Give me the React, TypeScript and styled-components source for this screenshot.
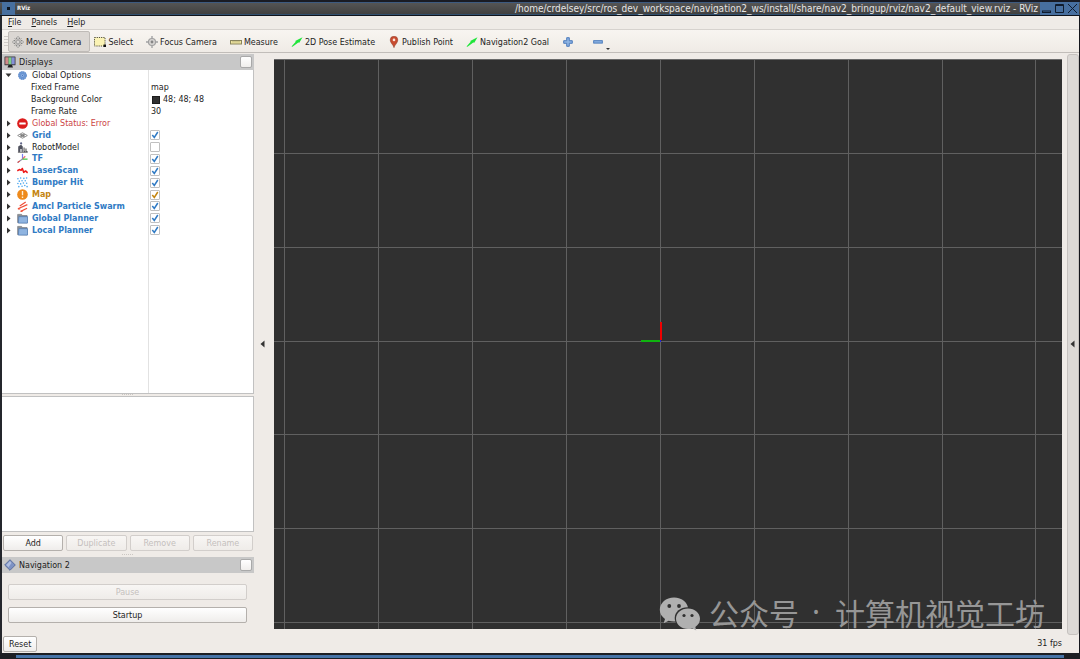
import React from "react";
import styled, { createGlobalStyle, css } from "styled-components";

const SANS = '"DejaVu Sans", Verdana, sans-serif';

const GlobalStyle = createGlobalStyle`
  *, *::before, *::after { box-sizing: border-box; }
  body { margin: 0; background: #efebe7; }
  button, input { font: inherit; color: inherit; margin: 0; }
  svg { display: block; }
`;

const Window = styled.div`
  display: flex;
  flex-direction: column;
  min-height: 100vh;
  font: 8px/12px ${SANS};
  color: #1c1c1c;
  background: #efebe7;
`;

/* ---------- window frame ---------- */

const TitleBar = styled.header`
  display: flex;
  align-items: stretch;
  height: 16px;
  padding: 0 1px 0 2px;
  border-top: 2px solid #191b24;
  border-bottom: 1px solid #10141c;
  background: linear-gradient(#565656, #3f3f3f);
  box-shadow: inset 0 1px #3d5a80, inset 0 -1px #31506f;
`;

const FrameButton = styled.button`
  display: grid;
  place-items: center;
  width: 13px;
  padding: 0;
  border: 0;
  color: #101c2e;
  background: #476f9f;
`;

const AppMark = styled.span`
  padding-left: 2px;
  font: bold 6px/12px "DejaVu Sans Condensed", ${SANS};
  color: #f4f4f4;
`;

const WindowTitle = styled.h1`
  flex: 1;
  margin: 0;
  padding-right: 2px;
  overflow: hidden;
  font: 10px/13px "DejaVu Sans Condensed", ${SANS};
  text-align: right;
  white-space: nowrap;
  color: #e6e6e6;
`;

const Body = styled.div`
  flex: 1;
  display: flex;
  flex-direction: column;
  border-left: 2px solid #24262c;
  border-right: 1px solid #14161c;
`;

const BottomFrame = styled.footer`
  height: 6px;
  border: solid #1c1e23;
  border-width: 2px 16px 1px 16px;
  background: #4673a6;
`;

/* ---------- menu and tool bar ---------- */

const MenuBar = styled.nav`
  display: flex;
  gap: 10px;
  height: 14px;
  padding: 0 6px;
  border-bottom: 1px solid #d6d2ce;
`;

const MenuButton = styled.button`
  padding: 0;
  border: 0;
  background: none;
  line-height: 14px;
`;

const ToolBar = styled.div`
  display: flex;
  align-items: center;
  height: 23px;
  padding-left: 2px;
  border-bottom: 1px solid #c1bdb9;
  background: linear-gradient(#f8f5f1, #efebe6);
`;

const Grip = styled.span`
  width: 4px;
  height: 12px;
  background: radial-gradient(circle, #d0ccc8 1px, transparent 1px) 0 0 / 2px 3px;
`;

const Tool = styled.button<{ $active?: boolean }>`
  display: flex;
  align-items: center;
  gap: 2px;
  height: 21px;
  padding: 1px 8px 0 3px;
  border: 1px solid transparent;
  border-radius: 2px;
  background: none;
  line-height: 14px;
  white-space: nowrap;
  > span { padding-top: 2px; }
  ${(p) =>
    p.$active &&
    css`
      border-color: #bfbbb7;
      background: #dbd7d3;
    `}
`;

const SmallTool = styled(Tool)`
  padding: 1px 13px 0 3px;
`;

/* ---------- docks ---------- */

const Main = styled.main`
  flex: 1;
  display: flex;
  padding-top: 1px;
`;

const Side = styled.aside`
  flex: none;
  display: flex;
  flex-direction: column;
  width: 252px;
`;

const DockHeader = styled.div`
  display: flex;
  align-items: center;
  gap: 3px;
  height: 16px;
  padding: 0 2px;
  background: #c8c8c8;
`;

const DockTitle = styled.h2`
  flex: 1;
  margin: 0;
  padding-top: 2px;
  font: inherit;
`;

const FloatButton = styled.button`
  width: 12px;
  height: 12px;
  padding: 0;
  border: 1px solid #a9a9a9;
  border-radius: 2px;
  background: linear-gradient(#ffffff, #f0eeec);
`;

const TreePane = styled.div`
  flex: 325 1 0;
  border-right: 1px solid #c1c1c1;
  border-bottom: 1px solid #c1c1c1;
  background: linear-gradient(#e2e2e2, #e2e2e2) 146px 0 / 1px 100% no-repeat #ffffff;
`;

const Tree = styled.ul`
  display: flex;
  flex-direction: column;
  height: 166px;
  margin: 0;
  padding: 0;
  list-style: none;
`;

type Tone = "plain" | "error" | "ok" | "warn";
const tones: Record<Tone, string> = {
  plain: "#1c1c1c",
  error: "#cc4444",
  ok: "#2f7ac4",
  warn: "#c4850f",
};

const Row = styled.li<{ $tone: Tone }>`
  flex: 1;
  min-height: 0;
  display: grid;
  grid-template-columns: 15px 15px 118px 1fr;
  align-items: center;
  line-height: 11px;
  color: ${(p) => tones[p.$tone]};
  font-weight: ${(p) => (p.$tone === "ok" || p.$tone === "warn" ? "bold" : "normal")};
  white-space: nowrap;
`;

const ChildRow = styled(Row)`
  grid-template-columns: 29px 120px 1fr;
`;

const Expander = styled.button`
  display: grid;
  place-items: center;
  width: 13px;
  height: 10px;
  padding: 0;
  border: 0;
  background: none;
`;

const Value = styled.span`
  display: flex;
  align-items: center;
  gap: 3px;
`;

const Swatch = styled.span`
  width: 8px;
  height: 8px;
  margin-left: 1px;
  border: 1px solid #1c1c1c;
  background: #303030;
`;

const CheckLabel = styled.label`
  display: grid;
  justify-self: start;
  place-items: center;
  > * { grid-area: 1 / 1; }
  > svg { pointer-events: none; visibility: hidden; }
  > input:checked + svg { visibility: visible; }
`;

const CheckInput = styled.input`
  appearance: none;
  width: 10px;
  height: 10px;
  border: 1px solid #c0c0c0;
  border-radius: 1px;
  background: #ffffff;
`;

const Splitter = styled.div<{ $height: number }>`
  display: grid;
  place-items: center;
  height: ${(p) => p.$height}px;
  &::before {
    content: "";
    width: 12px;
    height: 1px;
    background: repeating-linear-gradient(90deg, #cbc7c3 0 1px, transparent 1px 2px);
  }
`;

const Description = styled.div`
  flex: 135 1 0;
  border: 1px solid #c1c1c1;
  border-left: 0;
  background: #ffffff;
`;

const ButtonRow = styled.div`
  display: grid;
  grid-template-columns: repeat(4, 1fr);
  gap: 3px;
  padding: 3px 1px 0;
`;

const PushButton = styled.button`
  height: 16px;
  padding: 2px 5px 0;
  border: 1px solid #b4b0ac;
  border-radius: 2px;
  background: linear-gradient(#ffffff, #efedeb);
  line-height: 12px;
  &:disabled {
    border-color: #d2cecb;
    color: #c4c0bd;
    background: linear-gradient(#f8f6f4, #efece9);
  }
`;

const NavPanel = styled.div`
  display: grid;
  gap: 7px;
  padding: 11px 7px 12px 6px;
`;

const Collapse = styled.button<{ $solid?: boolean }>`
  flex: none;
  display: grid;
  place-items: center;
  width: ${(p) => (p.$solid ? 12 : 18)}px;
  padding: 0 1px 2px 0;
  border: 1px solid ${(p) => (p.$solid ? "#c6c2bf" : "transparent")};
  border-radius: 3px;
  background: ${(p) => (p.$solid ? "#dcd9d6" : "none")};
`;

const Viewport = styled.section`
  position: relative;
  flex: 1;
  min-width: 0;
  margin: 5px 5px 6px 2px;
  border-top: 1px solid #6a6a6a;
  background: #303030;
`;

const Scene = styled.svg`
  width: 100%;
  height: 100%;
  position: absolute;
  inset: 0;
`;

const Watermark = styled.div`
  position: absolute;
  right: 17px;
  bottom: -3px;
  display: flex;
  align-items: center;
  gap: 13px;
  font: 30px/40px "Noto Sans CJK SC", sans-serif;
  white-space: nowrap;
  color: #969696;
`;

const WatermarkSource = styled.span`
  display: flex;
  align-items: center;
  gap: 8px;
  padding-right: 2px;
  > svg { margin-top: 4px; }
`;

const Dot = styled.span`
  padding-right: 2px;
  margin-left: -2px;
  font-family: "Noto Sans", sans-serif;
`;

const StatusBar = styled.div`
  display: flex;
  align-items: center;
  justify-content: space-between;
  height: 18px;
  padding: 0 17px 0 1px;
`;

/* ---------- icons ---------- */

const Svg = ({ children, size = 12 }: { children: React.ReactNode; size?: number }) => (
  <svg width={size} height={size} viewBox="0 0 12 12" fill="none" aria-hidden="true">
    {children}
  </svg>
);

const MoveIcon = () => (
  <Svg>
    <path d="M6 0.500 8 2.500H6.800v2.700H9.500V4l2 2-2 2V6.800H6.800v2.700H8l-2 2-2-2h1.200V6.800H2.500V8l-2-2 2-2v1.200h2.700V2.500H4z" fill="#f4f2f0" stroke="#707070" strokeWidth="0.700" />
    <path d="M2.500 2.500l1 1M9.500 2.500l-1 1M2.500 9.500l1-1M9.500 9.500l-1-1" stroke="#888" strokeWidth="0.800" />
  </Svg>
);
const SelectIcon = () => (
  <Svg>
    <rect x="0.500" y="1.500" width="10.500" height="8.500" fill="#fbf3b4" stroke="#55523a" strokeDasharray="1.200 1" />
    <path d="M9.500 8.500h2.500v2.500H9.500z" fill="#111" />
  </Svg>
);
const FocusIcon = () => (
  <Svg>
    <path d="M6 0v12M0 6h12" stroke="#b4b4b4" strokeWidth="1.800" />
    <circle cx="6" cy="6" r="3.500" fill="#d8d6d4" stroke="#a0a0a0" strokeWidth="1.200" />
    <circle cx="6" cy="6" r="1.400" fill="#858585" />
  </Svg>
);
const MeasureIcon = () => (
  <Svg>
    <rect x="0.500" y="4.500" width="11" height="3.500" fill="#efe6a0" stroke="#8a855e" />
    <path d="M3 4.500v2M5 4.500v2M7 4.500v2M9 4.500v2" stroke="#8a855e" strokeWidth="0.600" />
  </Svg>
);
const ArrowIcon = () => (
  <Svg>
    <path d="M0.500 10.500 4.700 5.800 4.200 5 11.500 1.300 8.300 6.700 7.300 6.500 1.500 10.800z" fill="#1fe53a" />
  </Svg>
);
const PinIcon = () => (
  <Svg>
    <path d="M6 11.700C5.500 9 2.200 6.800 2.200 4a3.800 3.800 0 0 1 7.600 0C9.800 6.800 6.500 9 6 11.700z" fill="#c84c30" stroke="#8c3a26" strokeWidth="0.500" />
    <circle cx="6" cy="3.900" r="1.300" fill="#fbe6dc" />
  </Svg>
);
const PlusIcon = () => (
  <Svg>
    <path d="M4.700 1.700h2.600v3h3v2.600h-3v3H4.700v-3h-3V4.700h3z" fill="#8db3e2" stroke="#3f73b8" strokeWidth="0.900" />
  </Svg>
);
const MinusIcon = () => (
  <Svg>
    <rect x="1.700" y="4.700" width="8.600" height="2.400" fill="#8db3e2" stroke="#3f73b8" strokeWidth="0.900" />
  </Svg>
);
const MonitorIcon = () => (
  <Svg>
    <rect x="0.500" y="0.500" width="11" height="8.700" rx="0.500" fill="#3a3a3a" />
    <path d="M1.300 1.300h3.200v7h-3.200z" fill="#d08a8a" />
    <path d="M4.500 1.300h3v7h-3z" fill="#7ed08a" />
    <path d="M7.500 1.300h3.200v7H7.500z" fill="#8690d8" />
    <path d="M4.500 9h3.500l1 2.500H3.500z" fill="#222" />
  </Svg>
);
const DiamondIcon = () => (
  <Svg>
    <path d="M6 0.700 11.300 6 6 11.300.7 6z" fill="#7d92c4" stroke="#4a5f93" strokeWidth="0.800" />
    <path d="M6 2 2.200 6l2.300 2.300L7.500 4z" fill="#aebde0" />
  </Svg>
);
const GearIcon = () => (
  <Svg size={11}>
    <circle cx="6" cy="6" r="4" fill="#7aa3dc" stroke="#5f8ccb" strokeWidth="1.600" strokeDasharray="1.700 0.400" />
    <circle cx="6" cy="6" r="2.200" fill="#8fb2e4" stroke="#527fc0" strokeWidth="0.700" />
    <circle cx="6" cy="6" r="0.700" fill="#4a78bd" />
  </Svg>
);
const ErrorIcon = () => (
  <Svg size={11}>
    <circle cx="6" cy="6" r="5.800" fill="#dc1c1c" />
    <rect x="2.500" y="4.800" width="7" height="2.400" rx="0.400" fill="#fff" />
  </Svg>
);
const GridIcon = () => (
  <Svg size={11}>
    <path d="M6 3 11.300 6 6 9 .7 6zM3.300 4.500l5.300 3M8.700 4.500l-5.300 3" stroke="#8a8a8a" strokeWidth="1" />
    <path d="M6 4.800 8 6 6 7.200 4 6z" stroke="#555" strokeWidth="0.900" />
  </Svg>
);
const RobotIcon = () => (
  <Svg size={11}>
    <circle cx="4.500" cy="1.500" r="1.200" fill="#5d6285" />
    <path d="M1.500 4.500 4.500 3 6.300 5v6.300H5V7.500H3.700v3.800H1.300V6z" fill="#50525e" />
    <path d="M7.700 6v4.500h1.200M9.800 7v3.200l1.800.6" stroke="#555" strokeWidth="1.200" />
    <path d="M1 11.300h10.500" stroke="#777" strokeWidth="1" />
  </Svg>
);
const TfIcon = () => (
  <Svg size={11}>
    <path d="M.5 10.500 6 6.500" stroke="#9090a8" strokeWidth="1.200" />
    <path d="M6 7V1" stroke="#7c7cf0" strokeWidth="1.300" />
    <path d="M6 6.500 9 3.500" stroke="#e87070" strokeWidth="1.300" />
    <path d="M6 6.700 11.500 6.700" stroke="#48c848" strokeWidth="1.400" />
    <path d="M.8 10.300 3 8.700" stroke="#e05050" strokeWidth="1.200" />
  </Svg>
);
const LaserIcon = () => (
  <Svg size={11}>
    <path d="M.3 6.300 2.500 5l2 .8L5.800 3.800 7.300 8 9.300 6.500l2.300 2" stroke="#ee1818" strokeWidth="1.700" strokeLinejoin="round" />
  </Svg>
);
const PointsIcon = () => (
  <Svg size={11}>
    {[[1, 2], [4, 1], [7.5, 1.5], [10.5, 1], [2.5, 4.5], [5.5, 4], [9, 4], [1, 7], [4, 7.5], [7, 6.5], [10.5, 6.8], [2, 10.5], [5.5, 10], [8.5, 9.3], [11, 10.5]].map(([x, y]) => (
      <circle key={`${x}-${y}`} cx={x} cy={y} r="0.850" fill="#4aa6ee" />
    ))}
  </Svg>
);
const WarnIcon = () => (
  <Svg size={11}>
    <circle cx="6" cy="6" r="5.800" fill="#ee8a1c" />
    <path d="M6 2.300v4.500M6 8.200v1.500" stroke="#fff0d8" strokeWidth="1.500" />
  </Svg>
);
const SwarmIcon = () => (
  <Svg size={11}>
    <path d="M3 5.500 9.500 1M1 8.500 11.300 4M4 11.300 11 8" stroke="#f05038" strokeWidth="1.300" />
    <path d="M1 8.500h2.500M4 11.300h2" stroke="#f05038" strokeWidth="1.300" />
  </Svg>
);
const FolderIcon = () => (
  <Svg size={11}>
    <path d="M.7 10.500V1.500h4.300l1 1.300h5v8z" fill="#8a8f96" stroke="#6d7278" strokeWidth="0.700" />
    <path d="M2 4h9.500v7H1.500z" fill="#8fb4e0" stroke="#4f7cb4" strokeWidth="0.800" />
  </Svg>
);
const RightArrow = () => (
  <svg width="5" height="7" viewBox="0 0 5 7" aria-hidden="true"><path d="M1 0.500 4.500 3.500 1 6.500z" fill="#333" /></svg>
);
const DownArrow = () => (
  <svg width="7" height="5" viewBox="0 0 7 5" aria-hidden="true"><path d="M0.500 0.500h6L3.500 4z" fill="#333" /></svg>
);
const LeftArrow = () => (
  <svg width="5" height="8" viewBox="0 0 5 8" aria-hidden="true"><path d="M4.500 0.500v7L0.500 4z" fill="#333" /></svg>
);
const WeChatIcon = () => (
  <svg width="42" height="34" viewBox="0 0 42 34" aria-hidden="true">
    <path d="M15 0.500C7 0.500.8 6 .8 12.700c0 3.800 2 7 5.200 9.200l-1.300 4.300 4.900-2.500c1.700.5 3.600.8 5.500.8 8 0 14.200-5.300 14.200-11.900S23 .5 15 .5z" fill="#b0b0b0" />
    <ellipse cx="28.500" cy="21" rx="12.800" ry="10.800" fill="#303030" />
    <path d="M29 11.500c-6.700 0-12 4.600-12 10.300S22.300 32 29 32c1.500 0 3-.2 4.300-.6l4 2-1-3.400c2.900-1.900 4.700-4.800 4.700-8.200 0-5.700-5.300-10.300-12-10.300z" fill="#b0b0b0" />
    <g fill="#303030">
      <circle cx="10.300" cy="9" r="1.900" />
      <circle cx="20" cy="9" r="1.900" />
      <circle cx="25" cy="18.500" r="1.600" />
      <circle cx="33" cy="18.500" r="1.600" />
    </g>
  </svg>
);

/* ---------- data ---------- */

const tools = [
  { label: "Move Camera", icon: <MoveIcon />, active: true },
  { label: "Select", icon: <SelectIcon /> },
  { label: "Focus Camera", icon: <FocusIcon /> },
  { label: "Measure", icon: <MeasureIcon /> },
  { label: "2D Pose Estimate", icon: <ArrowIcon /> },
  { label: "Publish Point", icon: <PinIcon /> },
  { label: "Navigation2 Goal", icon: <ArrowIcon /> },
];

const options: { label: string; value: string; swatch?: boolean }[] = [
  { label: "Fixed Frame", value: "map" },
  { label: "Background Color", value: "48; 48; 48", swatch: true },
  { label: "Frame Rate", value: "30" },
];

const displays: { label: string; icon: React.ReactNode; tone: Tone; checked?: boolean }[] = [
  { label: "Global Status: Error", icon: <ErrorIcon />, tone: "error" },
  { label: "Grid", icon: <GridIcon />, tone: "ok", checked: true },
  { label: "RobotModel", icon: <RobotIcon />, tone: "plain", checked: false },
  { label: "TF", icon: <TfIcon />, tone: "ok", checked: true },
  { label: "LaserScan", icon: <LaserIcon />, tone: "ok", checked: true },
  { label: "Bumper Hit", icon: <PointsIcon />, tone: "ok", checked: true },
  { label: "Map", icon: <WarnIcon />, tone: "warn", checked: true },
  { label: "Amcl Particle Swarm", icon: <SwarmIcon />, tone: "ok", checked: true },
  { label: "Global Planner", icon: <FolderIcon />, tone: "ok", checked: true },
  { label: "Local Planner", icon: <FolderIcon />, tone: "ok", checked: true },
];

const columns = [10, 104, 198, 292, 386, 480, 574, 668, 761];
const rows = [93, 187, 281, 374, 468, 562];

function Check({ label, checked }: { label: string; checked: boolean }) {
  return (
    <CheckLabel>
      <CheckInput type="checkbox" defaultChecked={checked} aria-label={label} />
      <svg width="8" height="8" viewBox="0 0 8 8" fill="none" aria-hidden="true">
        <path d="M1.300 4 3.300 6.500 6.800 1" stroke="currentColor" strokeWidth="1.500" />
      </svg>
    </CheckLabel>
  );
}

export default function App() {
  return (
    <Window>
      <GlobalStyle />
      <TitleBar>
        <FrameButton aria-label="Window menu">
          <svg width="3" height="3"><rect width="3" height="3" fill="#0c1522" /></svg>
        </FrameButton>
        <AppMark>RViz</AppMark>
        <WindowTitle>
          /home/crdelsey/src/ros_dev_workspace/navigation2_ws/install/share/nav2_bringup/rviz/nav2_default_view.rviz - RViz
        </WindowTitle>
        <FrameButton aria-label="Minimize">
          <svg width="11" height="11" fill="none" stroke="currentColor"><rect x="1.500" y="8" width="8" height="1.500" /></svg>
        </FrameButton>
        <FrameButton aria-label="Maximize">
          <svg width="11" height="11" fill="none" stroke="currentColor"><path d="M1.500 1.500h8v8h-8zM1.500 2.500h8" /></svg>
        </FrameButton>
        <FrameButton aria-label="Close">
          <svg width="11" height="11" fill="none" stroke="currentColor"><path d="M1 1 10 10M10 1 1 10" /></svg>
        </FrameButton>
      </TitleBar>

      <Body>
        <MenuBar>
          <MenuButton><u>F</u>ile</MenuButton>
          <MenuButton><u>P</u>anels</MenuButton>
          <MenuButton><u>H</u>elp</MenuButton>
        </MenuBar>
        <ToolBar>
          <Grip />
          {tools.map((t) => (
            <Tool key={t.label} $active={t.active}>
              {t.icon}
              <span>{t.label}</span>
            </Tool>
          ))}
          <SmallTool aria-label="Add tool"><PlusIcon /></SmallTool>
          <SmallTool aria-label="Remove tool">
            <MinusIcon />
            <svg width="4" height="18" viewBox="0 0 4 18" aria-hidden="true"><path d="M0 15h4L2 17z" fill="#333" /></svg>
          </SmallTool>
        </ToolBar>

        <Main>
          <Side>
            <DockHeader>
              <MonitorIcon />
              <DockTitle>Displays</DockTitle>
              <FloatButton aria-label="Float Displays panel" />
            </DockHeader>
            <TreePane>
              <Tree>
                <Row $tone="plain">
                  <Expander aria-label="Collapse Global Options"><DownArrow /></Expander>
                  <GearIcon />
                  <span>Global Options</span>
                </Row>
                {options.map((o) => (
                  <ChildRow key={o.label} $tone="plain">
                    <i />
                    <span>{o.label}</span>
                    <Value>
                      {o.swatch && <Swatch />}
                      {o.value}
                    </Value>
                  </ChildRow>
                ))}
                {displays.map((d) => (
                  <Row key={d.label} $tone={d.tone}>
                    <Expander aria-label={`Expand ${d.label}`}><RightArrow /></Expander>
                    {d.icon}
                    <span>{d.label}</span>
                    {d.checked !== undefined && <Check label={d.label} checked={d.checked} />}
                  </Row>
                ))}
              </Tree>
            </TreePane>
            <Splitter $height={2} />
            <Description />
            <ButtonRow>
              <PushButton>Add</PushButton>
              <PushButton disabled>Duplicate</PushButton>
              <PushButton disabled>Remove</PushButton>
              <PushButton disabled>Rename</PushButton>
            </ButtonRow>
            <Splitter $height={6} />
            <DockHeader>
              <DiamondIcon />
              <DockTitle>Navigation 2</DockTitle>
              <FloatButton aria-label="Float Navigation 2 panel" />
            </DockHeader>
            <NavPanel>
              <PushButton disabled>Pause</PushButton>
              <PushButton>Startup</PushButton>
            </NavPanel>
          </Side>
          <Collapse aria-label="Hide left dock"><LeftArrow /></Collapse>
          <Viewport aria-label="3D view">
            <Scene viewBox="0 0 788 569" preserveAspectRatio="xMidYMid slice">
              <g stroke="#606060">
                {columns.map((x) => (
                  <path key={x} d={`M${x + 0.5} 0V569`} />
                ))}
                {rows.map((y) => (
                  <path key={y} d={`M0 ${y + 0.5}H788`} />
                ))}
              </g>
              <rect x="367" y="280" width="19" height="2" fill="#0fb40f" />
              <rect x="386" y="262" width="2" height="18" fill="#f00000" />
              <rect x="386" y="280" width="1" height="2" fill="#2020e0" />
            </Scene>
            <Watermark>
              <WatermarkSource>
                <WeChatIcon />
                <span>公众号</span>
              </WatermarkSource>
              <Dot>·</Dot>
              <span>计算机视觉工坊</span>
            </Watermark>
          </Viewport>
          <Collapse $solid aria-label="Show right dock"><LeftArrow /></Collapse>
        </Main>

        <StatusBar>
          <PushButton>Reset</PushButton>
          <span>31 fps</span>
        </StatusBar>
      </Body>
      <BottomFrame />
    </Window>
  );
}
